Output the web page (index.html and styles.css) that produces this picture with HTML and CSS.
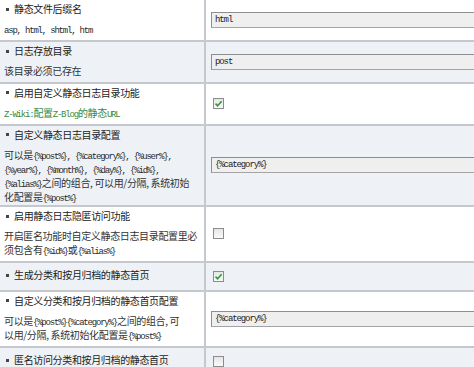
FILE: index.html
```html
<!DOCTYPE html>
<html lang="zh-CN">
<head>
  <meta charset="UTF-8">
  <title>静态化设置</title>
  <link rel="stylesheet" href="styles.css">
</head>
<body>

  <table class="settings">
    <tr>
      <td class="name">
        <p class="title"><span class="dot"></span>静态文件后缀名</p>
        <p class="desc"><span class="en">asp, html, shtml, htm</span></p>
      </td>
      <td class="value"><input type="text" class="field" value="html"></td>
    </tr>
    <tr class="alt">
      <td class="name">
        <p class="title"><span class="dot"></span>日志存放目录</p>
        <p class="desc">该目录必须已存在</p>
      </td>
      <td class="value"><input type="text" class="field" value="post"></td>
    </tr>
    <tr>
      <td class="name">
        <p class="title"><span class="dot"></span>启用自定义静态日志目录功能</p>
        <p class="desc"><a class="wiki" href="#"><span class="en">Z-Wiki:</span>配置<span class="en">Z-Blog</span>的静态<span class="en">URL</span></a></p>
      </td>
      <td class="value"><span class="chk on"><svg viewBox="0 0 9 9"><path d="M1.5 4.6 L3.6 6.8 L7.6 2.2"/></svg></span></td>
    </tr>
    <tr class="alt">
      <td class="name tight">
        <p class="title"><span class="dot"></span>自定义静态日志目录配置</p>
        <p class="desc">可以是<span class="en">{%post%}, {%category%}, {%user%},</span><br><span class="en">{%year%}, {%month%}, {%day%}, {%id%},</span><br><span class="en">{%alias%}</span>之间的组合, 可以用/分隔, 系统初始<br>化配置是<span class="en">{%post%}</span></p>
      </td>
      <td class="value"><input type="text" class="field" value="{%category%}"></td>
    </tr>
    <tr>
      <td class="name">
        <p class="title"><span class="dot"></span>启用静态日志隐匿访问功能</p>
        <p class="desc">开启匿名功能时自定义静态日志目录配置里必<br>须包含有<span class="en">{%id%}</span>或<span class="en">{%alias%}</span></p>
      </td>
      <td class="value"><span class="chk"></span></td>
    </tr>
    <tr class="alt">
      <td class="name">
        <p class="title"><span class="dot"></span>生成分类和按月归档的静态首页</p>
      </td>
      <td class="value"><span class="chk on"><svg viewBox="0 0 9 9"><path d="M1.5 4.6 L3.6 6.8 L7.6 2.2"/></svg></span></td>
    </tr>
    <tr>
      <td class="name">
        <p class="title"><span class="dot"></span>自定义分类和按月归档的静态首页配置</p>
        <p class="desc">可以是<span class="en">{%post%}{%category%}</span>之间的组合, 可<br>以用/分隔, 系统初始化配置是<span class="en">{%post%}</span></p>
      </td>
      <td class="value"><input type="text" class="field" value="{%category%}"></td>
    </tr>
    <tr class="alt">
      <td class="name">
        <p class="title"><span class="dot"></span>匿名访问分类和按月归档的静态首页</p>
      </td>
      <td class="value"><span class="chk"></span></td>
    </tr>
  </table>

</body>
</html>
```

FILE: styles.css
```css
html,
body {
  margin: 0;
  padding: 0;
  overflow: hidden;
  background-color: #fff;
}

body {
  font-family: "Noto Sans CJK SC", "Noto Sans", sans-serif;
  font-size: 10px;
  color: #333;
}

.settings {
  width: 500px;
  border-collapse: separate;
  border-spacing: 0;
}

.settings tr {
  background-color: #fff;
}

.settings tr.alt {
  background-color: #eef2f6;
}

.settings td {
  border-bottom: 2px solid #c5c9cd;
  vertical-align: middle;
}

.name {
  width: 200px;
  padding: 2px 0 4px 4px;
  border-right: 2px solid #c5c9cd;
  white-space: nowrap;
}

.name.tight {
  padding-bottom: 1.5px;
}

.value {
  padding: 8px 0 8px 5px;
}

.title {
  margin: 0;
  height: 14px;
  line-height: 14px;
  letter-spacing: -0.35px;
  color: #222;
}

.dot {
  display: inline-block;
  width: 3px;
  height: 3px;
  margin: 0 5px 2px 2px;
  vertical-align: middle;
  background-color: #444;
}

.desc {
  margin: 6px 0 0;
  line-height: 13.5px;
  letter-spacing: -0.35px;
}

.en {
  font-family: "Liberation Mono", monospace;
  font-size: 9px;
  line-height: 9px;
  letter-spacing: -1.2px;
  color: #2a2a2a;
}

.wiki {
  color: #3b8a3b;
  text-decoration: none;
}

.wiki .en {
  color: #3b8a3b;
}

.field {
  display: block;
  box-sizing: border-box;
  width: 100%;
  height: 16px;
  margin: 0;
  padding: 0 3px;
  border: 1px solid #a4a4a4;
  border-top-color: #8e8e8e;
  border-left-color: #8e8e8e;
  background-color: #efefef;
  font-family: "Liberation Mono", monospace;
  font-size: 9px;
  letter-spacing: -1.1px;
  color: #222;
}

.chk {
  display: block;
  box-sizing: border-box;
  width: 11px;
  height: 11px;
  margin-left: 2px;
  border: 1px solid #8c8c8c;
  background: linear-gradient(#e6e6e6, #fafafa);
}

.chk svg {
  display: block;
  width: 9px;
  height: 9px;
}

.chk svg path {
  fill: none;
  stroke: #2f9a3a;
  stroke-width: 1.6;
}
```
